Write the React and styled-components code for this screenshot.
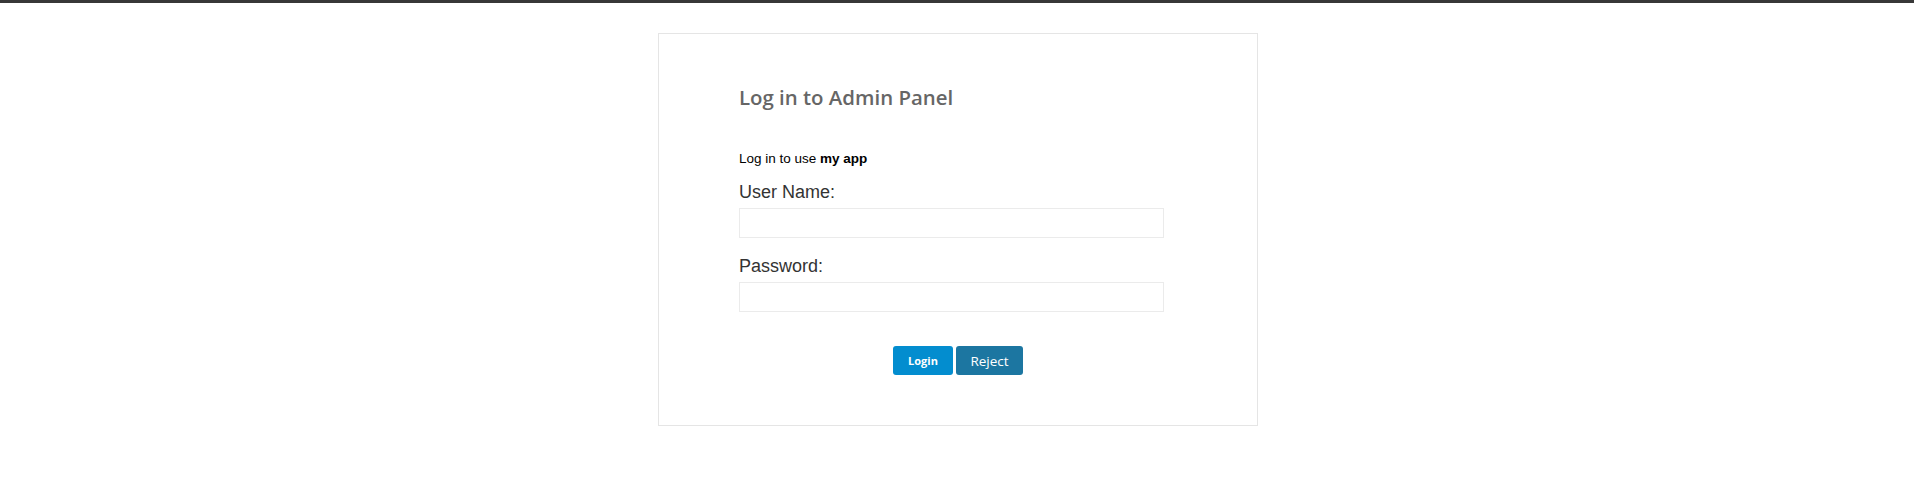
import React from 'react';
import styled, { createGlobalStyle } from 'styled-components';

const GlobalStyle = createGlobalStyle`
  html, body {
    margin: 0;
    padding: 0;
    background: #ffffff;
    font-family: "Liberation Sans", Arial, sans-serif;
  }
  * {
    box-sizing: border-box;
  }
`;

const TopBar = styled.div`
  height: 3px;
  background: #383838;
`;

const Page = styled.div`
  padding: 30px 0 0 2px;
`;

const Card = styled.div`
  width: 600px;
  margin: 0 auto;
  border: 1px solid #e5e5e5;
  padding: 51px 0 50px 80px;
`;

const Title = styled.h2`
  margin: 0;
  font-family: "Open Sans", sans-serif;
  font-size: 20.4px;
  line-height: 24px;
  font-weight: 600;
  color: #666666;
`;

const Intro = styled.p`
  margin: 42px 0 0;
  font-size: 13.5px;
  line-height: 16px;
  color: #000000;

  strong {
    font-weight: bold;
  }
`;

const Field = styled.div`
  display: flex;
  flex-direction: column;
  gap: 5px;
  margin-top: ${props => props.first ? '14px' : '17px'};
`;

const Label = styled.label`
  font-size: 18px;
  line-height: 22px;
  color: #333333;
`;

const Input = styled.input`
  width: 425px;
  height: 30px;
  border: 1px solid #ebebeb;
  padding: 4px 8px;
  font-size: 14px;
  outline: none;
`;

const Actions = styled.div`
  display: flex;
  justify-content: center;
  align-items: center;
  gap: 3px;
  margin-top: 34px;
  margin-left: -80px;
`;

const Button = styled.button`
  height: 29px;
  padding: 0 ${props => props.primary ? '12px' : '13px'};
  min-width: ${props => props.primary ? '60px' : '67px'};
  border: none;
  border-radius: 3px;
  font-family: "Open Sans", sans-serif;
  font-size: ${props => props.primary ? '11px' : '13.5px'};
  font-weight: ${props => props.primary ? 700 : 500};
  color: #ffffff;
  background: ${props => props.primary ? '#038dcf' : '#1c76a1'};
  cursor: pointer;
`;

export default function App() {
  return (
    <>
      <GlobalStyle />
      <TopBar />
      <Page>
        <Card>
          <Title>Log in to Admin Panel</Title>
          <Intro>Log in to use <strong>my app</strong></Intro>
          <Field first>
            <Label htmlFor="username">User Name:</Label>
            <Input id="username" type="text" />
          </Field>
          <Field>
            <Label htmlFor="password">Password:</Label>
            <Input id="password" type="password" />
          </Field>
          <Actions>
            <Button primary>Login</Button>
            <Button>Reject</Button>
          </Actions>
        </Card>
      </Page>
    </>
  );
}
